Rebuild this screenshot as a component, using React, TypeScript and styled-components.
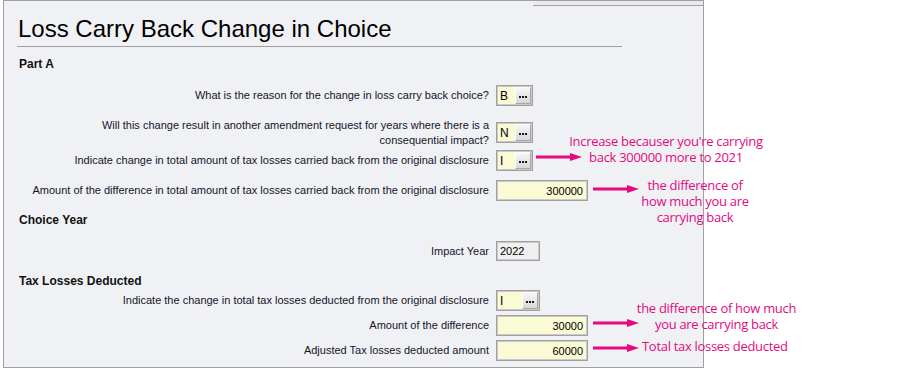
import styled, { createGlobalStyle } from 'styled-components';

const GlobalStyle = createGlobalStyle`
  html, body {
    margin: 0;
    padding: 0;
    background: #ffffff;
  }
  body {
    font-family: "Liberation Sans", Arial, sans-serif;
  }
`;

const PINK = '#e5097f';

// the form rows, in the order they show up
type Field =
  | { kind: 'combo'; value: string; width: number }
  | { kind: 'amount'; value: string }
  | { kind: 'readonly'; value: string };

const Page = styled.div`
  position: relative;
  width: 915px;
  height: 369px;
  overflow: hidden;
  background: #ffffff;
`;

const Panel = styled.div`
  box-sizing: border-box;
  margin-left: 3px;
  width: 701px;
  height: 368px;
  border: 1px solid #a0a0a0;
  background: #f0f1f5;
  display: flex;
  flex-direction: column;
`;

const TopStrip = styled.div`
  height: 5px;
  display: flex;
  justify-content: flex-end;
`;

const TopTab = styled.div`
  box-sizing: border-box;
  width: 170px;
  height: 5px;
  border-bottom: 1px solid #a0a0a0;
  background: #ebebee;
`;

const Title = styled.h1`
  box-sizing: border-box;
  margin: 9px 0 0 13px;
  padding: 0 0 3px 1px;
  width: 605px;
  border-bottom: 1px solid #a0a0a0;
  font-size: 24px;
  line-height: 28px;
  font-weight: normal;
  color: #000;
`;

const SectionTitle = styled.h2<{ $mt: number }>`
  margin: ${(p) => p.$mt}px 0 0 15px;
  font-size: 12px;
  line-height: 14px;
  font-weight: bold;
  color: #111;
`;

const Row = styled.div<{ $mt: number }>`
  display: grid;
  grid-template-columns: 485px auto;
  column-gap: 7px;
  align-items: center;
  margin-top: ${(p) => p.$mt}px;
`;

const Label = styled.div`
  text-align: right;
  font-size: 11px;
  line-height: 14.5px;
  color: #14142a;
`;

const Combo = styled.div<{ $w: number }>`
  box-sizing: border-box;
  display: flex;
  width: ${(p) => p.$w}px;
  height: 21px;
  padding: 1px;
  border: 1px solid #a0a0a0;
  background: #c8c8c8;
`;

const ComboValue = styled.div`
  flex: 1;
  display: flex;
  align-items: center;
  padding-left: 2px;
  background: #fafad4;
  font-size: 12px;
  color: #000;
`;

const DotsButton = styled.div`
  box-sizing: border-box;
  width: 16px;
  display: flex;
  align-items: flex-end;
  justify-content: center;
  padding-bottom: 5px;
  border-top: 1px solid #fdfdfd;
  border-left: 1px solid #fdfdfd;
  border-right: 1px solid #a8a8a8;
  border-bottom: 1px solid #a8a8a8;
  background: linear-gradient(#f6f6f6, #d8d8d8);
`;

const Dot = styled.span`
  width: 2px;
  height: 2px;
  margin: 0 0.5px;
  background: #1a1a1a;
`;

const TextBox = styled.div<{ $w: number; $readonly?: boolean }>`
  box-sizing: border-box;
  width: ${(p) => p.$w}px;
  height: ${(p) => (p.$readonly ? 20 : 21)}px;
  display: flex;
  align-items: center;
  justify-content: ${(p) => (p.$readonly ? 'flex-start' : 'flex-end')};
  padding: ${(p) => (p.$readonly ? '0 0 0 3px' : '0 4px 0 0')};
  border: 1px solid #a0a0a0;
  box-shadow: inset 0 0 0 1px #cacaca;
  background: ${(p) => (p.$readonly ? '#f0f0f0' : '#fafad4')};
  font-size: 11px;
  color: #000;
`;

const Note = styled.div<{ $left: number; $top: number; $width: number; $align?: string }>`
  position: absolute;
  left: ${(p) => p.$left}px;
  top: ${(p) => p.$top}px;
  width: ${(p) => p.$width}px;
  text-align: ${(p) => p.$align ?? 'center'};
  font-family: "Open Sans", "Noto Sans", sans-serif;
  font-size: 13px;
  line-height: 16px;
  letter-spacing: -0.3px;
  color: ${PINK};
  white-space: nowrap;
`;

const NoteLine = styled.span`
  display: block;
`;

const ArrowWrap = styled.svg<{ $left: number; $top: number }>`
  position: absolute;
  left: ${(p) => p.$left}px;
  top: ${(p) => p.$top}px;
`;

function Arrow({ left, top }: { left: number; top: number }) {
  return (
    <ArrowWrap $left={left} $top={top} width="46" height="10" viewBox="0 0 46 10">
      <rect x="0" y="3.5" width="36" height="3" fill={PINK} />
      <polygon points="34,1 46,5 34,9" fill={PINK} />
    </ArrowWrap>
  );
}

function Input({ field }: { field: Field }) {
  if (field.kind === 'combo') {
    return (
      <Combo $w={field.width}>
        <ComboValue>{field.value}</ComboValue>
        <DotsButton>
          <Dot />
          <Dot />
          <Dot />
        </DotsButton>
      </Combo>
    );
  }
  if (field.kind === 'readonly') {
    return <TextBox $w={44} $readonly>{field.value}</TextBox>;
  }
  return <TextBox $w={92}>{field.value}</TextBox>;
}

export default function App() {
  return (
    <>
      <GlobalStyle />
      <Page>
        <Panel>
          <TopStrip>
            <TopTab />
          </TopStrip>
          <Title>Loss Carry Back Change in Choice</Title>

          <SectionTitle $mt={10}>Part A</SectionTitle>
          <Row $mt={14}>
            <Label>What is the reason for the change in loss carry back choice?</Label>
            <Input field={{ kind: 'combo', value: 'B', width: 37 }} />
          </Row>
          <Row $mt={12}>
            <Label>
              Will this change result in another amendment request for years where there is a
              <br />
              consequential impact?
            </Label>
            <Input field={{ kind: 'combo', value: 'N', width: 37 }} />
          </Row>
          <Row $mt={3}>
            <Label>Indicate change in total amount of tax losses carried back from the original disclosure</Label>
            <Input field={{ kind: 'combo', value: 'I', width: 37 }} />
          </Row>
          <Row $mt={9}>
            <Label>Amount of the difference in total amount of tax losses carried back from the original disclosure</Label>
            <Input field={{ kind: 'amount', value: '300000' }} />
          </Row>

          <SectionTitle $mt={12}>Choice Year</SectionTitle>
          <Row $mt={14}>
            <Label>Impact Year</Label>
            <Input field={{ kind: 'readonly', value: '2022' }} />
          </Row>

          <SectionTitle $mt={13}>Tax Losses Deducted</SectionTitle>
          <Row $mt={2}>
            <Label>Indicate the change in total tax losses deducted from the original disclosure</Label>
            <Input field={{ kind: 'combo', value: 'I', width: 44 }} />
          </Row>
          <Row $mt={4}>
            <Label>Amount of the difference</Label>
            <Input field={{ kind: 'amount', value: '30000' }} />
          </Row>
          <Row $mt={4}>
            <Label>Adjusted Tax losses deducted amount</Label>
            <Input field={{ kind: 'amount', value: '60000' }} />
          </Row>
        </Panel>

        <Arrow left={536} top={151.5} />
        <Note $left={556} $top={133} $width={220}>
          <NoteLine>Increase becauser you're carrying</NoteLine>
          <NoteLine>back 300000 more to 2021</NoteLine>
        </Note>

        <Arrow left={593} top={184} />
        <Note $left={630} $top={177} $width={130}>
          <NoteLine>the difference of</NoteLine>
          <NoteLine>how much you are</NoteLine>
          <NoteLine>carrying back</NoteLine>
        </Note>

        <Arrow left={593} top={318} />
        <Note $left={616} $top={300} $width={201}>
          <NoteLine>the difference of how much</NoteLine>
          <NoteLine>you are carrying back</NoteLine>
        </Note>

        <Arrow left={593} top={343} />
        <Note $left={642} $top={338} $width={170} $align="left">
          <NoteLine>Total tax losses deducted</NoteLine>
        </Note>
      </Page>
    </>
  );
}
